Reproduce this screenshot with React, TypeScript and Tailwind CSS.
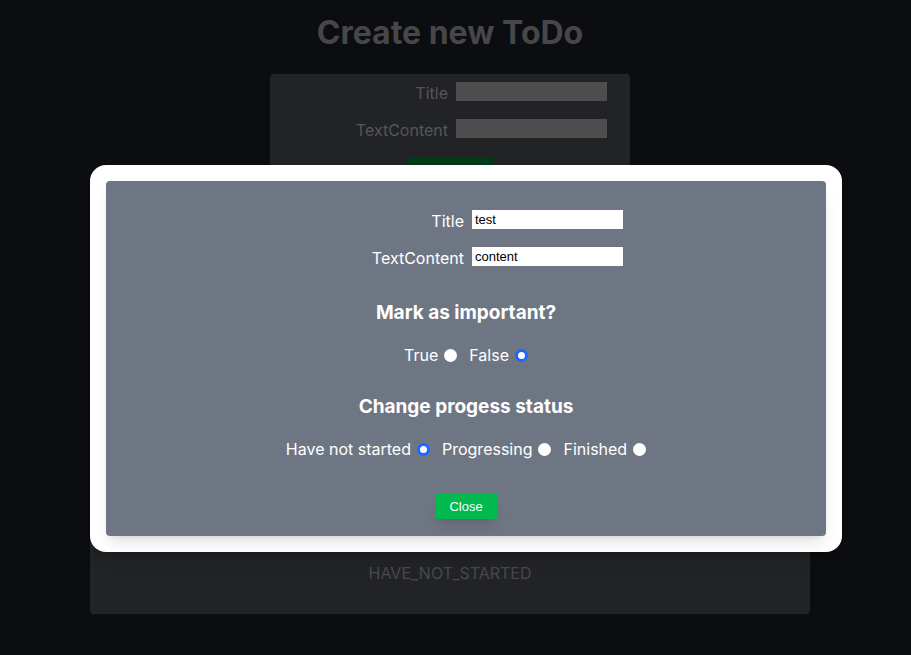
import React from "react";

const sans = { fontFamily: "Inter, 'Noto Sans', sans-serif" };

function Radio({ checked }: { checked?: boolean }) {
  return checked ? (
    <span className="inline-block w-[13px] h-[13px] rounded-full bg-white border-[3px] border-[#1e66ff]" />
  ) : (
    <span className="inline-block w-[13px] h-[13px] rounded-full bg-white" />
  );
}

function RadioOption({ label, checked }: { label: string; checked?: boolean }) {
  return (
    <label className="flex items-center">
      <span>{label}</span>
      <span className="ml-[6px] mr-[12px] flex items-center">
        <Radio checked={checked} />
      </span>
    </label>
  );
}

function FieldRow({
  label,
  value,
  dim,
}: {
  label: string;
  value?: string;
  dim?: boolean;
}) {
  return (
    <div className="flex items-center h-[19px]">
      <div
        className={`w-1/2 flex justify-end pr-[2px] pt-[3px] text-base leading-[19px] ${
          dim ? "text-[#555657]" : "text-white"
        }`}
      >
        {label}
      </div>
      <div className="w-1/2 pl-[6px]">
        <div
          className={`w-[151px] h-[19px] pl-[3px] text-[13px] leading-[19px] text-black ${
            dim ? "bg-[#4e4e4e]" : "bg-white"
          }`}
          style={{ fontFamily: "'Liberation Sans', Arial, sans-serif" }}
        >
          {value}
        </div>
      </div>
    </div>
  );
}

export default function App() {
  return (
    <div className="relative min-h-[655px] bg-[#0c0d10] overflow-hidden" style={sans}>
      {/* page underneath the overlay */}
      <div className="flex flex-col items-center pt-[13px] pr-[11px]">
        <h1 className="text-[32px] leading-10 font-bold text-[#474748]">
          Create new ToDo
        </h1>
        <div className="mt-[21px] w-[360px] bg-[#222326] rounded pt-2 pb-2">
          <div className="flex flex-col gap-[18px]">
            <FieldRow label="Title" dim />
            <FieldRow label="TextContent" dim />
          </div>
          <div className="flex justify-center mt-[19px]">
            <button
              className="w-[86px] h-[25px] bg-[#003a17] text-[13px] text-[#2a3a2e]"
              style={{ fontFamily: "'Liberation Sans', Arial, sans-serif" }}
            >
              Add Todo
            </button>
          </div>
        </div>
        <div className="mt-5 w-[720px] h-[404px] bg-[#222326] rounded flex flex-col items-center justify-end pb-[29px] text-[#49494b]">
          <div className="leading-6">HAVE_NOT_STARTED</div>
        </div>
      </div>

      {/* modal */}
      <div className="absolute left-[90px] top-[165px] w-[752px] h-[387px] bg-white rounded-2xl p-4 shadow-lg">
        <div className="h-full bg-[#6f7683] rounded shadow-lg text-white pt-[29px]">
          <div className="flex flex-col gap-[18px]">
            <FieldRow label="Title" value="test" />
            <FieldRow label="TextContent" value="content" />
          </div>
          <h3 className="mt-[35px] text-center text-[19px] leading-6 font-bold">
            Mark as important?
          </h3>
          <div className="mt-[18px] flex justify-center items-center text-base leading-6 pl-[12px]">
            <RadioOption label="True" />
            <RadioOption label="False" checked />
          </div>
          <h3 className="mt-[28px] text-center text-[19px] leading-6 font-bold">
            Change progess status
          </h3>
          <div className="mt-[18px] flex justify-center items-center text-base leading-6 pl-[12px]">
            <RadioOption label="Have not started" checked />
            <RadioOption label="Progressing" />
            <RadioOption label="Finished" />
          </div>
          <div className="mt-[33px] flex justify-center">
            <button
              className="w-[63px] h-[25px] bg-[#00b94f] text-white text-[13px] shadow-lg"
              style={{ fontFamily: "'Liberation Sans', Arial, sans-serif" }}
            >
              Close
            </button>
          </div>
        </div>
      </div>
    </div>
  );
}
